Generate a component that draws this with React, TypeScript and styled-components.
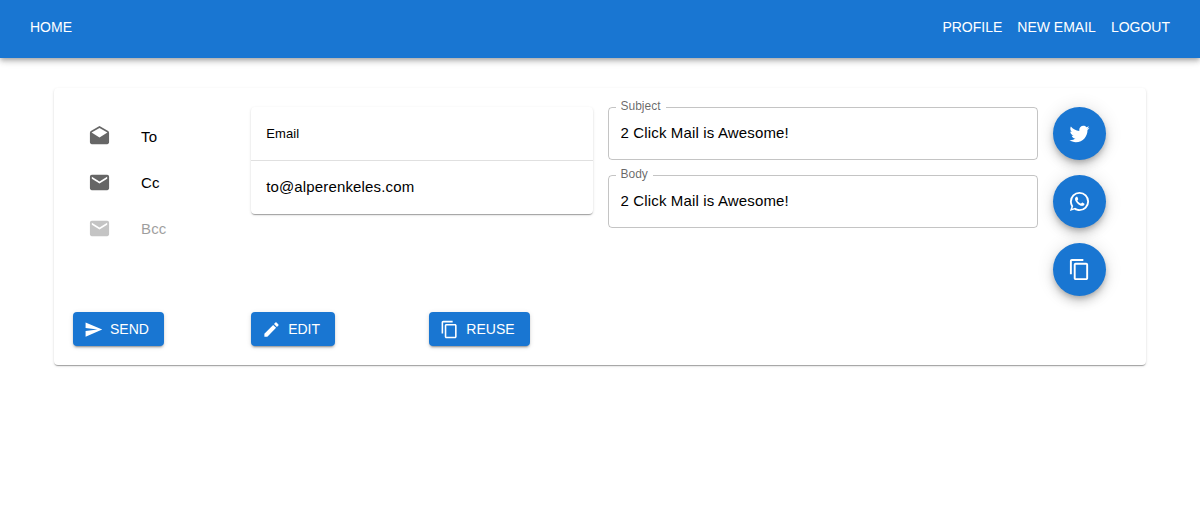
import React from "react";
import styled, { createGlobalStyle, css } from "styled-components";
import { MdContentCopy, MdDrafts, MdEdit, MdMail, MdSend } from "react-icons/md";

const GlobalStyle = createGlobalStyle`
  *, *::before, *::after { box-sizing: border-box; }
  body {
    margin: 0;
    background: #fff;
    color: rgba(0, 0, 0, 0.87);
    font-family: "Liberation Sans", Arial, sans-serif;
    font-size: 15px;
    line-height: 22px;
  }
  button, input { font: inherit; color: inherit; }
`;

const primary = "#1976d2";

const raised = css`
  border-radius: 4px;
  background: #fff;
  box-shadow: 0 2px 1px -1px rgba(0, 0, 0, 0.2), 0 1px 1px 0 rgba(0, 0, 0, 0.14),
    0 1px 3px 0 rgba(0, 0, 0, 0.12);
`;

const capsText = css`
  font-size: 14px;
  font-weight: 500;
  text-transform: uppercase;
`;

const AppBar = styled.header`
  display: flex;
  justify-content: space-between;
  padding: 16px 30px 20px;
  background: ${primary};
  color: #fff;
  box-shadow: 0 2px 4px -1px rgba(0, 0, 0, 0.2), 0 4px 5px 0 rgba(0, 0, 0, 0.14),
    0 1px 10px 0 rgba(0, 0, 0, 0.12);
`;

const NavGroup = styled.nav`
  display: flex;
  gap: 15px;
`;

const NavLink = styled.a`
  ${capsText}
  line-height: 22px;
  color: inherit;
  text-decoration: none;
`;

const Page = styled.main`
  padding: 30px 54px;
`;

const Card = styled.section`
  ${raised}
  display: grid;
  grid-template-columns: repeat(12, minmax(0, 1fr));
  gap: 16px 15px;
  align-items: start;
  padding: 19px;
`;

const Column = styled.div<{ $span: number }>`
  grid-column: span ${(p) => p.$span};
`;

const Stack = styled(Column)`
  display: flex;
  flex-direction: column;
  gap: 15px;
`;

const RecipientList = styled.ul`
  margin: 0;
  padding: 7px 0;
  list-style: none;
`;

const RecipientButton = styled.button`
  display: flex;
  align-items: center;
  width: 100%;
  padding: 12px 15px;
  border: 0;
  background: none;
  color: #000;
  line-height: 22px;
  text-align: left;
  letter-spacing: 0.01em;
  cursor: pointer;

  &:disabled {
    opacity: 0.38;
    cursor: default;
  }

  svg {
    width: 23px;
    height: 23px;
    margin: -1px 30px 0 0;
    color: rgba(0, 0, 0, 0.6);
  }
`;

const EmailTable = styled.table`
  ${raised}
  width: 100%;
  border-spacing: 0;
  letter-spacing: 0.01em;
  color: #000;
`;

const HeadCell = styled.th`
  padding: 16px 15px 15px;
  border-bottom: 1px solid #e0e0e0;
  font-size: 13px;
  font-weight: 500;
  text-align: left;
`;

const Cell = styled.td`
  padding: 15px 15px 16px;
`;

const Field = styled.div`
  position: relative;
`;

const FieldLabel = styled.label`
  position: absolute;
  top: -8px;
  left: 8px;
  padding: 0 5px;
  background: #fff;
  color: rgba(0, 0, 0, 0.6);
  font-size: 12px;
  line-height: 14px;
`;

const FieldInput = styled.input`
  display: block;
  width: 100%;
  height: 53px;
  padding: 0 12px 2px;
  border: 1px solid rgba(0, 0, 0, 0.23);
  border-radius: 4px;
  background: transparent;
  color: #000;
  letter-spacing: 0.01em;
`;

const RoundButton = styled.button`
  display: flex;
  align-items: center;
  justify-content: center;
  width: 53px;
  height: 53px;
  padding: 0;
  border: 0;
  border-radius: 50%;
  background: ${primary};
  color: #fff;
  box-shadow: 0 3px 5px -1px rgba(0, 0, 0, 0.2), 0 6px 10px 0 rgba(0, 0, 0, 0.14),
    0 1px 18px 0 rgba(0, 0, 0, 0.12);
  cursor: pointer;

  svg {
    width: 23px;
    height: 23px;
    fill: currentColor;
  }
`;

const ActionButton = styled.button`
  ${capsText}
  display: flex;
  align-items: center;
  gap: 7px;
  height: 34px;
  padding: 0 15px 0 11px;
  border: 0;
  border-radius: 4px;
  background: ${primary};
  color: #fff;
  box-shadow: 0 3px 1px -2px rgba(0, 0, 0, 0.2), 0 2px 2px 0 rgba(0, 0, 0, 0.14),
    0 1px 5px 0 rgba(0, 0, 0, 0.12);
  cursor: pointer;

  svg {
    width: 19px;
    height: 19px;
  }
`;

const TwitterIcon = () => (
  <svg viewBox="0 0 24 24" aria-hidden="true">
    <path d="M22.46 6c-.77.35-1.6.58-2.46.69.88-.53 1.56-1.37 1.88-2.38-.83.5-1.75.85-2.72 1.05C18.37 4.5 17.26 4 16 4c-2.35 0-4.27 1.92-4.27 4.29 0 .34.04.67.11.98C8.28 9.09 5.11 7.38 3 4.79c-.37.63-.58 1.37-.58 2.15 0 1.49.75 2.81 1.91 3.56-.71 0-1.37-.2-1.95-.5v.03c0 2.08 1.48 3.82 3.44 4.21a4.22 4.22 0 0 1-1.93.07 4.28 4.28 0 0 0 4 2.98 8.521 8.521 0 0 1-5.33 1.84c-.34 0-.68-.02-1.02-.06C3.44 20.29 5.7 21 8.12 21 16 21 20.33 14.46 20.33 8.79c0-.19 0-.37-.01-.56.84-.6 1.56-1.36 2.14-2.23z" />
  </svg>
);

const WhatsAppIcon = () => (
  <svg viewBox="0 0 24 24" aria-hidden="true">
    <path d="M16.75 13.96c.25.13.41.2.46.3.06.11.04.61-.21 1.18-.2.56-1.24 1.1-1.7 1.12-.46.02-.47.36-2.96-.73-2.49-1.09-3.99-3.75-4.11-3.92-.12-.17-.96-1.38-.92-2.61.05-1.22.69-1.8.95-2.04.24-.26.51-.29.68-.26h.47c.15 0 .36-.06.55.45l.69 1.87c.06.13.1.28.01.44l-.27.41-.39.42c-.12.12-.26.25-.12.5.12.26.62 1.09 1.32 1.78.91.88 1.71 1.17 1.95 1.3.24.14.39.12.54-.04l.81-.94c.19-.25.35-.19.58-.11l1.67.88M12 2a10 10 0 0 1 10 10 10 10 0 0 1-10 10c-1.97 0-3.8-.57-5.35-1.55L2 22l1.55-4.65A9.969 9.969 0 0 1 2 12 10 10 0 0 1 12 2m0 2a8 8 0 0 0-8 8c0 1.72.54 3.31 1.46 4.61L4.5 19.5l2.89-.96A7.95 7.95 0 0 0 12 20a8 8 0 0 0 8-8 8 8 0 0 0-8-8z" />
  </svg>
);

const recipients = [
  { label: "To", Icon: MdDrafts, disabled: false },
  { label: "Cc", Icon: MdMail, disabled: false },
  { label: "Bcc", Icon: MdMail, disabled: true },
];

const fields = [
  { id: "subject", label: "Subject", value: "2 Click Mail is Awesome!" },
  { id: "body", label: "Body", value: "2 Click Mail is Awesome!" },
];

const shares = [
  { label: "Share on Twitter", Icon: TwitterIcon },
  { label: "Share on WhatsApp", Icon: WhatsAppIcon },
  { label: "Copy", Icon: MdContentCopy },
];

const actions = [
  { label: "Send", Icon: MdSend },
  { label: "Edit", Icon: MdEdit },
  { label: "Reuse", Icon: MdContentCopy },
];

export default function App() {
  return (
    <>
      <GlobalStyle />
      <AppBar>
        <NavGroup>
          <NavLink href="#home">Home</NavLink>
        </NavGroup>
        <NavGroup>
          <NavLink href="#profile">Profile</NavLink>
          <NavLink href="#new">New Email</NavLink>
          <NavLink href="#logout">Logout</NavLink>
        </NavGroup>
      </AppBar>
      <Page>
        <Card>
          <Column $span={2}>
            <RecipientList>
              {recipients.map(({ label, Icon, disabled }) => (
                <li key={label}>
                  <RecipientButton type="button" disabled={disabled}>
                    <Icon />
                    {label}
                  </RecipientButton>
                </li>
              ))}
            </RecipientList>
          </Column>
          <Column $span={4}>
            <EmailTable>
              <thead>
                <tr>
                  <HeadCell scope="col">Email</HeadCell>
                </tr>
              </thead>
              <tbody>
                <tr>
                  <Cell>to@alperenkeles.com</Cell>
                </tr>
              </tbody>
            </EmailTable>
          </Column>
          <Stack $span={5}>
            {fields.map(({ id, label, value }) => (
              <Field key={id}>
                <FieldInput id={id} defaultValue={value} readOnly />
                <FieldLabel htmlFor={id}>{label}</FieldLabel>
              </Field>
            ))}
          </Stack>
          <Stack $span={1}>
            {shares.map(({ label, Icon }) => (
              <RoundButton key={label} type="button" aria-label={label}>
                <Icon />
              </RoundButton>
            ))}
          </Stack>
          {actions.map(({ label, Icon }) => (
            <Column key={label} $span={2}>
              <ActionButton type="button">
                <Icon />
                {label}
              </ActionButton>
            </Column>
          ))}
        </Card>
      </Page>
    </>
  );
}
